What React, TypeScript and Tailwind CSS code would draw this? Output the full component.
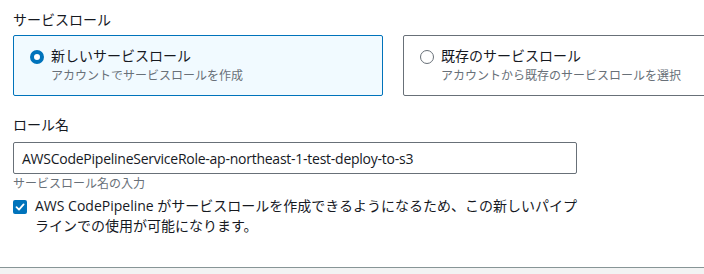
import React from "react";

const font = { fontFamily: '"Open Sans", "Noto Sans CJK JP", sans-serif' };

export default function App() {
  return (
    <div className="w-[704px] h-[274px] overflow-hidden bg-white flex flex-col" style={font}>
      <div className="flex-1 pl-[13px] pt-[9px] w-[900px]">
        <div className="text-[14px] leading-[22px] text-[#16191f]">サービスロール</div>
        <div className="mt-[4px] grid grid-cols-[370px_370px] gap-[20px]">
          <div className="h-[61px] border border-[#0073bb] bg-[#f1faff] rounded-[2px] flex pl-[16px] pt-[10px]">
            <div className="mt-[4px] w-[14px] h-[14px] rounded-full border-[4px] border-[#0073bb] bg-white" />
            <div className="ml-[7px]">
              <div className="text-[14px] leading-[20px] text-[#16191f]">新しいサービスロール</div>
              <div className="text-[12px] leading-[20px] text-[#687078]">アカウントでサービスロールを作成</div>
            </div>
          </div>
          <div className="h-[61px] border border-[#687078] bg-white rounded-[2px] flex pl-[16px] pt-[10px]">
            <div className="mt-[4px] w-[14px] h-[14px] rounded-full border-[1.5px] border-[#687078] bg-white" />
            <div className="ml-[7px]">
              <div className="text-[14px] leading-[20px] text-[#16191f]">既存のサービスロール</div>
              <div className="text-[12px] leading-[20px] text-[#687078]">アカウントから既存のサービスロールを選択</div>
            </div>
          </div>
        </div>
        <div className="mt-[18px] text-[14px] leading-[22px] text-[#16191f]">ロール名</div>
        <div className="mt-[6px] w-[564px] h-[32px] border border-[#687078] rounded-[2px] flex items-center pl-[8px] text-[14px] tracking-[-0.25px] text-[#16191f]">
          AWSCodePipelineServiceRole-ap-northeast-1-test-deploy-to-s3
        </div>
        <div className="mt-[1px] text-[12px] leading-[18px] text-[#687078]">サービスロール名の入力</div>
        <div className="mt-[3px] w-[564px] flex">
          <div className="mt-[4px] w-[14px] h-[14px] shrink-0 rounded-[2px] bg-[#0073bb] flex items-center justify-center">
            <svg width="10" height="10" viewBox="0 0 10 10" fill="none">
              <path d="M1.5 5.2 L4 7.6 L8.6 2.4" stroke="white" strokeWidth="1.8" strokeLinecap="round" strokeLinejoin="round" />
            </svg>
          </div>
          <div className="ml-[8px] text-[14px] leading-[20px] text-[#16191f]">
            AWS CodePipeline がサービスロールを作成できるようになるため、この新しいパイプラインでの使用が可能になります。
          </div>
        </div>
      </div>
      <div className="h-[7px] border-t border-[#879596] bg-[#f2f3f3]" />
    </div>
  );
}
